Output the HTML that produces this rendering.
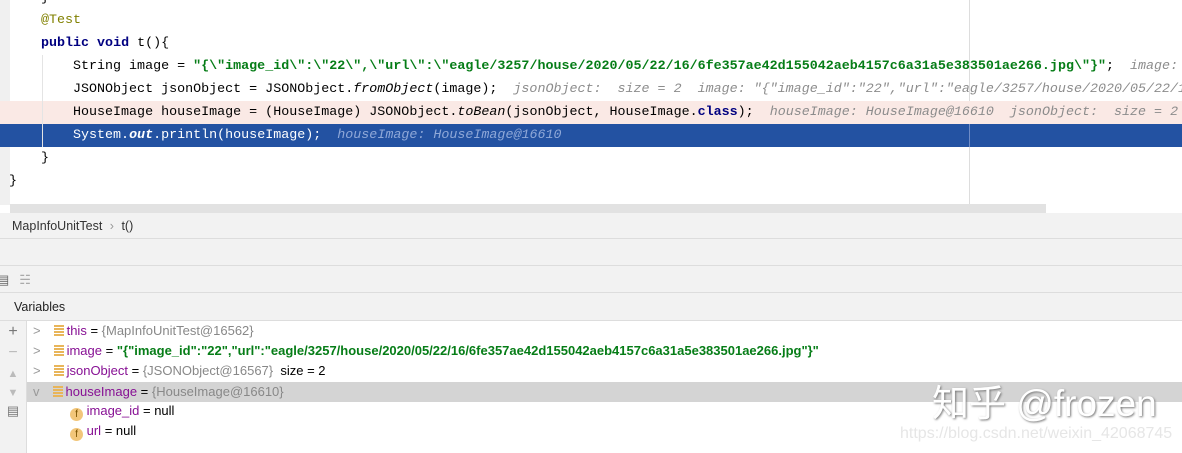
<!DOCTYPE html>
<html><head><meta charset="utf-8"><style>
*{margin:0;padding:0;box-sizing:border-box}
body{width:1182px;height:453px;overflow:hidden;background:#fff;position:relative;font-family:"Liberation Sans",sans-serif}
.abs{position:absolute}
.code{font-family:"Liberation Mono",monospace;font-size:13.35px;white-space:pre;line-height:23px;height:23px;left:0;width:1182px;color:#000;overflow:hidden}
.k{color:#000080;font-weight:bold}
.s{color:#067d17;font-weight:bold}
.h{color:#8c8c8c;font-style:italic}
.an{color:#808000}
.it{font-style:italic}
.var{font-size:13px;line-height:20px;height:20px;white-space:pre;left:0;width:1182px;overflow:hidden}
.ic{display:inline-block;width:10px;height:11px;background:repeating-linear-gradient(#e8b55a 0 2px,#fff0 2px 3px);vertical-align:-1px;margin:0 3px 0 13px}
.f{display:inline-block;width:13px;height:13px;border-radius:50%;background:#f2c67a;color:#7a5200;font-size:10px;line-height:13px;text-align:center;vertical-align:-2px}
</style></head><body>
<div class="abs" style="left:0;top:0;width:10px;height:205px;background:#f0f0f0"></div>
<div class="abs" style="left:969px;top:0;width:1px;height:213px;background:#ddd"></div>
<div class="abs code" style="top:-13px"><span style="padding-left:41px">}</span></div>
<div class="abs code an" style="top:9px;padding-left:41px">@Test</div>
<div class="abs code" style="top:32px;padding-left:41px"><span class="k">public void</span> t(){</div>
<div class="abs code" style="top:55px;padding-left:73px">String image = <span class="s">"{\"image_id\":\"22\",\"url\":\"eagle/3257/house/2020/05/22/16/6fe357ae42d155042aeb4157c6a31a5e383501ae266.jpg\"}"</span>;  <span class="h">image: "{"image_id":"22","url":"</span></div>
<div class="abs code" style="top:78px;padding-left:73px">JSONObject jsonObject = JSONObject.<span class="it">fromObject</span>(image);  <span class="h">jsonObject:  size = 2  image: "{"image_id":"22","url":"eagle/3257/house/2020/05/22/16</span></div>
<div class="abs code" style="top:101px;padding-left:73px;background:#fae9e5">HouseImage houseImage = (HouseImage) JSONObject.<span class="it">toBean</span>(jsonObject, HouseImage.<span class="k">class</span>);  <span class="h">houseImage: HouseImage@16610  jsonObject:  size = 2</span></div>
<div class="abs code" style="top:124px;padding-left:73px;background:#2352a2;color:#fff">System.<b class="it">out</b>.println(houseImage);  <span style="color:#8fa8d8;font-style:italic">houseImage: HouseImage@16610</span></div>
<div class="abs" style="left:969px;top:124px;width:1px;height:23px;background:#6f8cc6"></div>
<div class="abs" style="left:42px;top:55px;width:1px;height:92px;background:#e4e4e4"></div>
<div class="abs code" style="top:147px;padding-left:41px">}</div>
<div class="abs code" style="top:170px;padding-left:9px">}</div>
<div class="abs" style="left:10px;top:204px;width:1036px;height:9px;background:#e2e2e2"></div>
<div class="abs" style="left:0;top:213px;width:1182px;height:26px;background:#f2f2f2;border-bottom:1px solid #ddd;font-size:12.5px;line-height:26px;color:#333;padding-left:12px">MapInfoUnitTest <span style="color:#999;margin:0 4px">›</span> t()</div>
<div class="abs" style="left:0;top:239px;width:1182px;height:27px;background:#f2f2f2;border-bottom:1px solid #ddd"></div>
<div class="abs" style="left:0;top:266px;width:1182px;height:27px;background:#f2f2f2;border-bottom:1px solid #ddd;color:#aaa;font-size:13px;line-height:27px"><span style="margin-left:-3px;color:#666">▤</span><span style="margin-left:10px">☵</span></div>
<div class="abs" style="left:0;top:293px;width:1182px;height:28px;background:#f2f2f2;border-bottom:1px solid #ddd;font-size:12.5px;line-height:28px;padding-left:14px;color:#222">Variables</div>
<div class="abs" style="left:0;top:321px;width:27px;height:132px;background:#f2f2f2;border-right:1px solid #ddd;color:#777;font-size:16px;text-align:center">
<div style="margin-top:2px">+</div><div style="color:#bbb;margin-top:3px">−</div><div style="color:#bbb;font-size:11px;margin-top:6px">▲</div><div style="color:#bbb;font-size:11px;margin-top:7px">▼</div><div style="font-size:13px;margin-top:4px">▤</div></div>
<div class="abs" style="left:27px;top:382px;width:1155px;height:20px;background:#d4d4d4"></div>
<div class="abs var" style="top:321px;padding-left:33px"><span style="color:#999">&gt;</span><span class="ic"></span><span style="color:#871094">this</span> = <span style="color:#888">{MapInfoUnitTest@16562}</span></div>
<div class="abs var" style="top:341px;padding-left:33px"><span style="color:#999">&gt;</span><span class="ic"></span><span style="color:#871094">image</span> = <span class="s">"{"image_id":"22","url":"eagle/3257/house/2020/05/22/16/6fe357ae42d155042aeb4157c6a31a5e383501ae266.jpg"}"</span></div>
<div class="abs var" style="top:361px;padding-left:33px"><span style="color:#999">&gt;</span><span class="ic"></span><span style="color:#871094">jsonObject</span> = <span style="color:#888">{JSONObject@16567}</span>  size = 2</div>
<div class="abs var" style="top:382px;padding-left:33px"><span style="color:#999">v</span><span class="ic"></span><span style="color:#871094">houseImage</span> = <span style="color:#888">{HouseImage@16610}</span></div>
<div class="abs var" style="top:401px;padding-left:70px"><span class="f">f</span> <span style="color:#871094">image_id</span> = null</div>
<div class="abs var" style="top:421px;padding-left:70px"><span class="f">f</span> <span style="color:#871094">url</span> = null</div>
<div class="abs" style="left:932px;top:383px;font-family:'Liberation Sans','Noto Sans CJK SC',sans-serif;font-size:37px;line-height:42px;color:#fff;text-shadow:1px 1px 2px #777;white-space:nowrap">知乎 @frozen</div>
<div class="abs" style="left:900px;top:425px;font-size:16px;color:#e6e6e6;white-space:nowrap">https://blog.csdn.net/weixin_42068745</div>
</body></html>
